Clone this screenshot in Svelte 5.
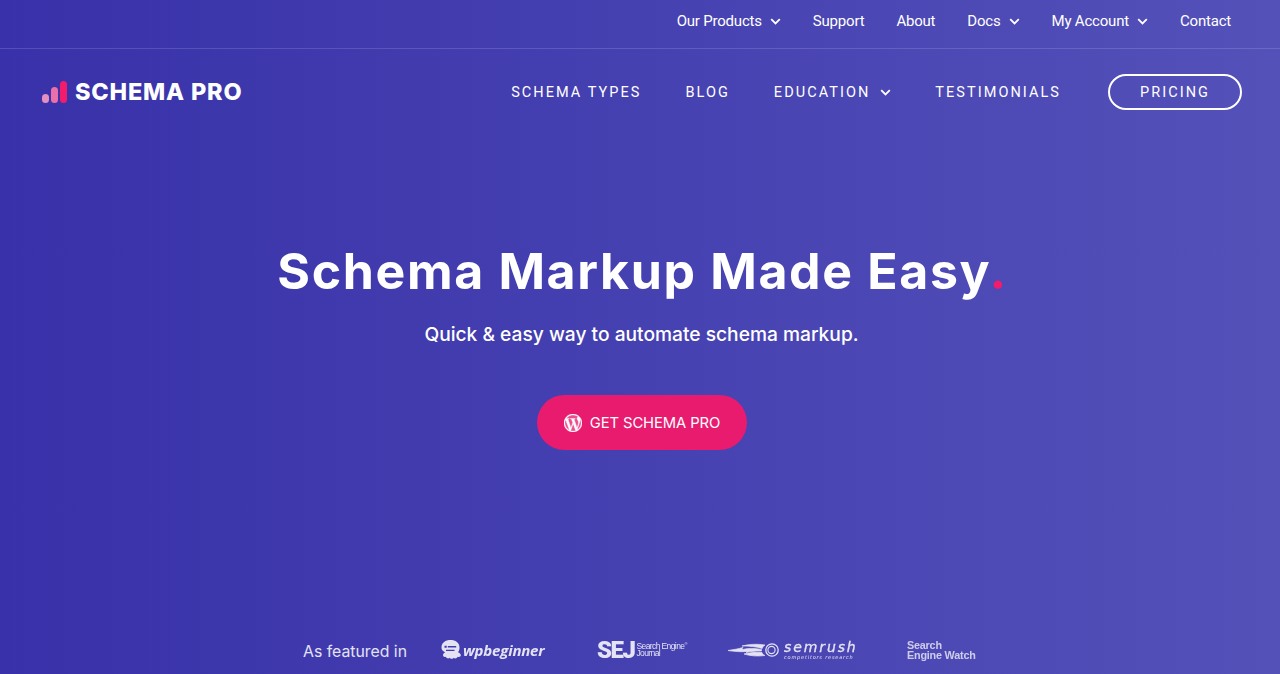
<script>
  const topLinks = [
    { label: 'Our Products', caret: true },
    { label: 'Support' },
    { label: 'About' },
    { label: 'Docs', caret: true },
    { label: 'My Account', caret: true },
    { label: 'Contact' }
  ];
  const mainLinks = [
    { label: 'SCHEMA TYPES' },
    { label: 'BLOG' },
    { label: 'EDUCATION', caret: true },
    { label: 'TESTIMONIALS' }
  ];
</script>

{#snippet caret()}
  <svg class="caret" viewBox="0 0 11 7" width="11" height="7" aria-hidden="true">
    <path d="M1.200 1.200l4.300 4.300 4.300-4.300" fill="none" stroke="currentColor" stroke-width="1.800" />
  </svg>
{/snippet}

<div class="page">
  <nav class="topbar">
    {#each topLinks as link}
      <a href="#top">{link.label}{#if link.caret}{@render caret()}{/if}</a>
    {/each}
  </nav>

  <header class="mainbar">
    <a class="brand" href="#top">
      <span class="bars">
        <i class="b1"></i><i class="b2"></i><i class="b3"></i>
      </span>
      SCHEMA PRO
    </a>
    <nav class="mainnav">
      {#each mainLinks as link}
        <a href="#top">{link.label}{#if link.caret}{@render caret()}{/if}</a>
      {/each}
      <a class="pricing" href="#top">PRICING</a>
    </nav>
  </header>

  <main class="hero">
    <h1>Schema Markup Made Easy<span>.</span></h1>
    <p>Quick &amp; easy way to automate schema markup.</p>
    <a class="cta" href="#top">
      <svg viewBox="0 0 24 24" width="18" height="18" aria-hidden="true">
        <circle cx="12" cy="12" r="11" fill="#fff" fill-opacity=".22" />
        <path fill="#fff" stroke="#fff" stroke-width=".5" d="M21.469 6.825c.84 1.537 1.318 3.3 1.318 5.175 0 3.979-2.156 7.456-5.363 9.325l3.295-9.527c.615-1.54.82-2.771.82-3.864 0-.405-.026-.78-.07-1.11m-7.981.105c.647-.03 1.232-.105 1.232-.105.582-.075.514-.93-.067-.899 0 0-1.755.135-2.88.135-1.064 0-2.85-.15-2.85-.15-.585-.03-.661.855-.075.885 0 0 .54.061 1.125.09l1.68 4.605-2.37 7.08L5.354 6.9c.649-.03 1.234-.1 1.234-.1.585-.075.516-.93-.065-.896 0 0-1.746.138-2.874.138-.2 0-.438-.008-.69-.015C4.911 3.15 8.235 1.215 12 1.215c2.809 0 5.365 1.072 7.286 2.833-.046-.003-.091-.009-.141-.009-1.06 0-1.812.923-1.812 1.914 0 .89.513 1.643 1.06 2.531.411.72.89 1.643.89 2.977 0 .915-.354 1.994-.821 3.479l-1.075 3.585-3.9-11.61.001.014zM12 22.784c-1.059 0-2.081-.153-3.048-.437l3.237-9.406 3.315 9.087c.024.053.05.101.078.149-1.12.393-2.325.609-3.582.609M1.211 12c0-1.564.336-3.05.935-4.39L7.29 21.709C3.694 19.96 1.212 16.271 1.211 12M12 0C5.385 0 0 5.385 0 12s5.385 12 12 12 12-5.385 12-12S18.615 0 12 0"/>
      </svg>
      GET SCHEMA PRO
    </a>
  </main>

  <footer class="featured">
    <span class="as">As featured in</span>

    <div class="logo wpb">
      <svg viewBox="0 0 21 20" width="21" height="20" aria-hidden="true">
        <path fill="#e4e3f3" d="M10.500 0C15.500 0 19.500 2.500 19.500 7.500c0 2-.5 3.500-1.500 4.800 1.500.7 2.800 1.700 2.800 3 0 1.600-2 2-3.300 1.400-.4 1.700-2.600 2.200-3.700 1.100-.7 1.400-3.400 1.400-4.200 0-1.100 1.100-3.300.6-3.700-1.100C5 17.300 3 16.900 3 15.300c0-1.300 1-2.300 2.200-3C2.500 11 1.500 9.500 1.500 7.500 1.500 2.500 5.500 0 10.500 0z"/>
        <path fill="#423cb0" d="M4.500 5.700h2.200v2H4.500zM7.800 6h8.400v1.400H7.800zM6 9.700h8.500v1.300H6z"/>
      </svg>
      <span>wpbeginner</span>
    </div>

    <div class="logo sej">
      <strong>SEJ</strong>
      <span>Search Engine<sup>®</sup><br />Journal</span>
    </div>

    <div class="logo sem">
      <svg viewBox="0 0 52 14" width="52" height="14" aria-hidden="true">
        <g fill="#e4e3f3" stroke="#e4e3f3" stroke-width=".7">
          <path d="M14 3C20 1.500 28 .5 37 2 35.500 3 34.800 4 34.200 5.500 28 3.500 21 3 14 3z"/>
          <path d="M0 7.500C6 6.500 10 6 15 4.500 14 5.500 14 6 14.500 6.500 20 5 27 5 33.500 6.500V8C27 8 22 8.500 18 9.500 19.500 8.800 19 8.500 18 8.500 12 9 6 8.500 0 7.500z"/>
          <path d="M16 11C22 9.500 28 9 34 9.500 34.500 11 35.500 12 37 12.500 30 13.500 22 13 16 11z"/>
        </g>
        <circle cx="44" cy="7" r="6.200" fill="none" stroke="#e4e3f3" stroke-width="1.300"/>
        <circle cx="43.500" cy="7" r="3.600" fill="none" stroke="#e4e3f3" stroke-width="1.100"/>
      </svg>
      <div class="sem-text">
        <span class="sem-name">semrush</span>
        <span class="sem-sub">competitors research</span>
      </div>
    </div>

    <div class="logo sew">Search<br />Engine Watch</div>
  </footer>
</div>

<style>
  :global(body) {
    margin: 0;
    overflow: hidden;
  }

  .page {
    height: 674px;
    display: flex;
    flex-direction: column;
    overflow: hidden;
    color: #fff;
    background: linear-gradient(90deg, #3831a9 0%, #5451b9 100%);
    font-family: Lato, "Liberation Sans", sans-serif;
  }

  a {
    color: inherit;
    text-decoration: none;
  }

  .caret {
    margin-left: 8px;
    vertical-align: 1px;
  }

  .topbar {
    height: 49px;
    box-sizing: border-box;
    display: flex;
    align-items: center;
    justify-content: flex-end;
    gap: 32px;
    padding: 0 49px 7px 0;
    border-bottom: 1px solid rgba(255, 255, 255, .14);
    font-family: Roboto, sans-serif;
    font-size: 15px;
    letter-spacing: -.2px;
  }

  .mainbar {
    height: 86px;
    display: flex;
    align-items: center;
    justify-content: space-between;
    padding: 0 38px 0 42px;
  }

  .brand {
    display: flex;
    align-items: flex-end;
    gap: 8px;
    font-family: Inter, sans-serif;
    font-weight: 800;
    font-size: 23.5px;
    letter-spacing: .8px;
    line-height: 28px;
  }

  .bars {
    display: flex;
    align-items: flex-end;
    gap: 2px;
    height: 22px;
    margin-bottom: 3px;
  }

  .bars i {
    width: 7px;
    border-radius: 4px;
  }

  .b1 { height: 9px; background: #e38fc0; }
  .b2 { height: 16px; background: #ed6fa9; }
  .b3 { height: 22px; background: #f21b6c; }

  .mainnav {
    display: flex;
    align-items: center;
    gap: 44px;
    font-family: Roboto, sans-serif;
    font-size: 14.5px;
    font-weight: 400;
    letter-spacing: 2.05px;
  }

  .mainnav .caret {
    margin-left: 10px;
  }

  .pricing {
    width: 134px;
    height: 36px;
    box-sizing: border-box;
    display: flex;
    align-items: center;
    justify-content: center;
    margin-left: 3px;
    border: 2px solid #fff;
    border-radius: 18px;
  }

  .hero {
    flex: 1;
    display: flex;
    flex-direction: column;
    align-items: center;
    padding: 102px 0 0 3px;
  }

  h1 {
    margin: 0 0 0 2px;
    font-family: Inter, sans-serif;
    font-size: 50px;
    font-weight: 700;
    line-height: 68px;
    letter-spacing: 1.65px;
  }

  h1 span {
    color: #f21b6c;
  }

  .hero p {
    margin: 15px 0 0;
    font-family: Inter, sans-serif;
    font-size: 19.2px;
    font-weight: 500;
    line-height: 28px;
  }

  .cta {
    width: 210px;
    height: 55px;
    display: flex;
    align-items: center;
    justify-content: center;
    gap: 8px;
    margin: 47px 0 0 1px;
    border-radius: 27.5px;
    background: #e81b6f;
    font-family: Inter, sans-serif;
    font-size: 14.8px;
    letter-spacing: -.1px;
  }

  .featured {
    height: 48px;
    display: flex;
    align-items: center;
    padding: 0 0 0 303px;
    box-sizing: border-box;
    color: #e4e3f3;
  }

  .as {
    width: 137px;
    margin-top: 2px;
    font-family: Inter, sans-serif;
    font-size: 15.8px;
    flex: none;
  }

  .logo {
    display: flex;
    align-items: center;
    flex: none;
    filter: blur(.4px);
  }

  .wpb {
    width: 157px;
    gap: 2px;
    font-family: "Open Sans", sans-serif;
    font-style: italic;
    font-weight: 700;
    font-size: 15px;
    letter-spacing: -.2px;
  }

  .sej {
    width: 131px;
    gap: 2px;
  }

  .sej strong {
    font-family: Roboto, sans-serif;
    font-size: 24px;
    font-weight: 900;
    letter-spacing: -1.5px;
    line-height: 20px;
  }

  .sej span {
    font-family: "Liberation Sans", sans-serif;
    font-size: 8.5px;
    line-height: 7.5px;
    letter-spacing: -.6px;
  }

  .sej sup {
    font-size: 4px;
    line-height: 0;
  }

  .sem {
    width: 179px;
    gap: 4px;
  }

  .sem-text {
    display: flex;
    flex-direction: column;
    font-family: "DejaVu Sans", sans-serif;
    font-style: italic;
  }

  .sem-name {
    font-size: 14px;
    line-height: 13px;
    letter-spacing: 1.9px;
    -webkit-text-stroke: .3px #e4e3f3;
  }

  .sem-sub {
    font-size: 5px;
    line-height: 6px;
    letter-spacing: .8px;
  }

  .sew {
    display: block;
    font-family: "Liberation Sans", sans-serif;
    font-size: 10.8px;
    font-weight: 700;
    line-height: 10px;
    letter-spacing: -.2px;
    opacity: .85;
  }
</style>
